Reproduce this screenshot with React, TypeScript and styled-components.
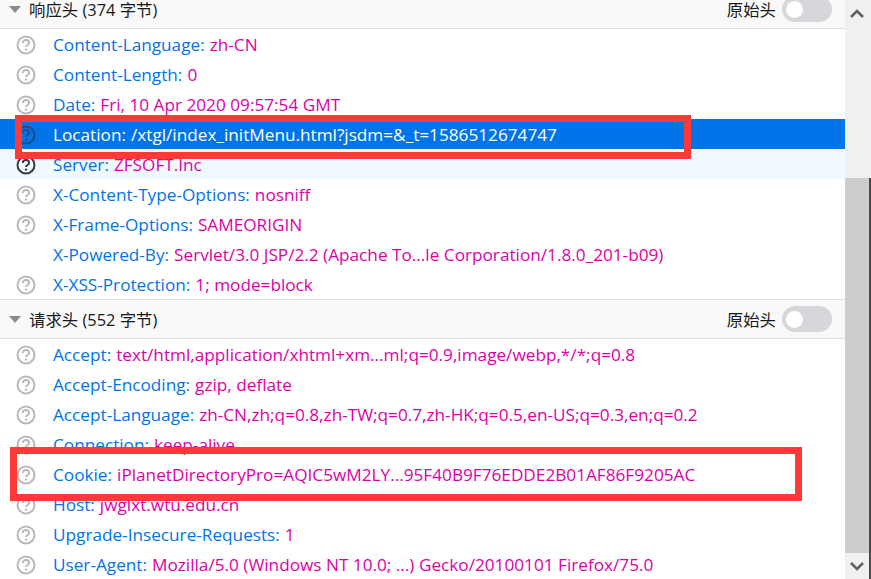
import React from 'react';
import styled, { createGlobalStyle } from 'styled-components';

type Header = { name: string; value: string; noIcon?: boolean; state?: 'selected' | 'hover' };

const responseHeaders: Header[] = [
  { name: 'Content-Language', value: 'zh-CN' },
  { name: 'Content-Length', value: '0' },
  { name: 'Date', value: 'Fri, 10 Apr 2020 09:57:54 GMT' },
  { name: 'Location', value: '/xtgl/index_initMenu.html?jsdm=&_t=1586512674747', state: 'selected' },
  { name: 'Server', value: 'ZFSOFT.Inc', state: 'hover' },
  { name: 'X-Content-Type-Options', value: 'nosniff' },
  { name: 'X-Frame-Options', value: 'SAMEORIGIN' },
  { name: 'X-Powered-By', value: 'Servlet/3.0 JSP/2.2 (Apache To...le Corporation/1.8.0_201-b09)', noIcon: true },
  { name: 'X-XSS-Protection', value: '1; mode=block' },
];

const requestHeaders: Header[] = [
  { name: 'Accept', value: 'text/html,application/xhtml+xm...ml;q=0.9,image/webp,*/*;q=0.8' },
  { name: 'Accept-Encoding', value: 'gzip, deflate' },
  { name: 'Accept-Language', value: 'zh-CN,zh;q=0.8,zh-TW;q=0.7,zh-HK;q=0.5,en-US;q=0.3,en;q=0.2' },
  { name: 'Connection', value: 'keep-alive' },
  { name: 'Cookie', value: 'iPlanetDirectoryPro=AQIC5wM2LY...95F40B9F76EDDE2B01AF86F9205AC' },
  { name: 'Host', value: 'jwglxt.wtu.edu.cn' },
  { name: 'Upgrade-Insecure-Requests', value: '1' },
  { name: 'User-Agent', value: 'Mozilla/5.0 (Windows NT 10.0; ...) Gecko/20100101 Firefox/75.0' },
];

const HelpIcon = ({ color }: { color: string }) => (
  <svg width="20" height="20" viewBox="0 0 20 20" fill="none" stroke={color} strokeWidth="2">
    <circle cx="10" cy="10" r="8.5" />
    <path d="M6.9 8a3.1 3 0 0 1 6.2 0c0 2-3.1 2-3.1 4" strokeWidth="1.9" />
    <circle cx="10" cy="14.6" r="1.2" fill={color} stroke="none" />
  </svg>
);

const iconColor = (state?: Header['state']) => {
  if (state === 'selected') return '#1a4d86';
  if (state === 'hover') return '#38383d';
  return '#b9b9bb';
};

const HeaderList = ({ items }: { items: Header[] }) => (
  <>
    {items.map((item) => (
      <Row key={item.name} $state={item.state}>
        <IconSlot>{!item.noIcon && <HelpIcon color={iconColor(item.state)} />}</IconSlot>
        <Name $selected={item.state === 'selected'}>{item.name}:</Name>
        <Value $selected={item.state === 'selected'}>{item.value}</Value>
      </Row>
    ))}
  </>
);

const SectionHeader = ({ title }: { title: string }) => (
  <SectionBar>
    <Arrow />
    <SectionTitle>{title}</SectionTitle>
    <RawLabel>原始头</RawLabel>
    <Toggle>
      <Knob />
    </Toggle>
  </SectionBar>
);

const App = () => (
  <Page>
    <GlobalStyle />
    <Panel>
      <SectionHeader title="响应头 (374 字节)" />
      <HeaderList items={responseHeaders} />
      <SectionHeader title="请求头 (552 字节)" />
      <HeaderList items={requestHeaders} />
      <LocationMark />
      <CookieMark />
    </Panel>
    <Scrollbar>
      <ScrollButton>
        <svg width="14" height="9" viewBox="0 0 14 9" fill="none" stroke="#606060" strokeWidth="2.6">
          <path d="M1 8l6-6 6 6" />
        </svg>
      </ScrollButton>
      <ScrollSpace />
      <Thumb />
      <ScrollButton $edge>
        <svg width="14" height="9" viewBox="0 0 14 9" fill="none" stroke="#606060" strokeWidth="2.6">
          <path d="M1 1l6 6 6-6" />
        </svg>
      </ScrollButton>
    </Scrollbar>
  </Page>
);

const GlobalStyle = createGlobalStyle`
  html, body {
    margin: 0;
    padding: 0;
    height: 100%;
    overflow: hidden;
    background: #fff;
  }
`;

const Page = styled.div`
  display: flex;
  width: 871px;
  height: 579px;
  overflow: hidden;
  font-family: 'Open Sans', 'Noto Sans CJK SC', sans-serif;
  font-size: 17.2px;
`;

const Panel = styled.div`
  position: relative;
  flex: 1;
  min-width: 0;
  overflow: hidden;
`;

const SectionBar = styled.div`
  display: flex;
  align-items: center;
  height: 38px;
  margin-top: -10px;
  padding: 0 13px 0 9px;
  font-size: 16.4px;
  line-height: 17px;
  background: #f9f9fa;
  border-bottom: 1px solid #e0e0e2;

  & ~ & {
    margin-top: 0;
    border-top: 1px solid #e0e0e2;
  }
`;

const Arrow = styled.div`
  width: 0;
  height: 0;
  margin-right: 8px;
  border-left: 6px solid transparent;
  border-right: 6px solid transparent;
  border-top: 7px solid #8a8a8c;
`;

const SectionTitle = styled.span`
  flex: 1;
  color: #18191a;
  white-space: nowrap;
`;

const RawLabel = styled.span`
  margin-right: 6px;
  color: #18191a;
`;

const Toggle = styled.div`
  display: flex;
  align-items: center;
  width: 50px;
  height: 26px;
  padding: 0 4px;
  box-sizing: border-box;
  border-radius: 13px;
  background: #d7d7db;
`;

const Knob = styled.div`
  width: 17px;
  height: 17px;
  border-radius: 50%;
  background: #fff;
`;

const Row = styled.div<{ $state?: Header['state'] }>`
  display: flex;
  align-items: center;
  height: 30px;
  padding-top: 1px;
  box-sizing: border-box;
  white-space: nowrap;
  background: ${({ $state }) =>
    $state === 'selected' ? '#0074e8' : $state === 'hover' ? '#f0f9fe' : 'transparent'};
`;

const IconSlot = styled.div`
  display: flex;
  align-items: center;
  justify-content: center;
  flex: none;
  width: 20px;
  height: 20px;
  margin: 1px 16px 0;
`;

const Name = styled.span<{ $selected?: boolean }>`
  margin-left: 1px;
  color: ${({ $selected }) => ($selected ? '#fff' : '#0074e8')};
`;

const Value = styled.span<{ $selected?: boolean }>`
  margin-left: 5px;
  color: ${({ $selected }) => ($selected ? '#fff' : '#dd00a9')};
`;

const LocationMark = styled.div`
  position: absolute;
  left: 15px;
  top: 115px;
  width: 676px;
  height: 44px;
  box-sizing: border-box;
  border: 7px solid #ff3838;
`;

const CookieMark = styled.div`
  position: absolute;
  left: 10px;
  top: 447px;
  width: 792px;
  height: 54px;
  box-sizing: border-box;
  border: 7px solid #ff3838;
`;

const Scrollbar = styled.div`
  display: flex;
  flex-direction: column;
  flex: none;
  width: 26px;
  background: #f0f0f0;
`;

const ScrollButton = styled.div<{ $edge?: boolean }>`
  display: flex;
  align-items: center;
  justify-content: center;
  flex: none;
  height: 26px;
  padding-right: ${({ $edge }) => ($edge ? '1px' : '3px')};
  border-right: ${({ $edge }) => ($edge ? '2px solid #4a4a4a' : 'none')};
`;

const ScrollSpace = styled.div`
  flex: none;
  height: 152px;
`;

const Thumb = styled.div`
  flex: 1;
  background: #cdcdcd;
  border-right: 2px solid #4a4a4a;
`;

export default App;
